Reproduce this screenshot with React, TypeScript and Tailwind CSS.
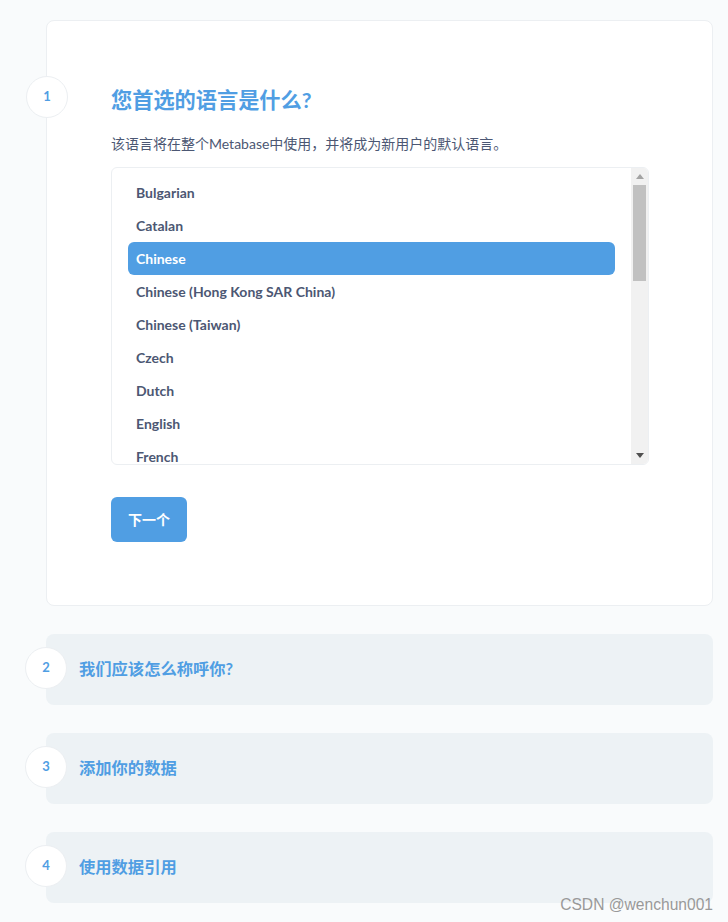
const FONT = { fontFamily: 'Lato, "Noto Sans CJK SC", sans-serif' };

const languages = [
  "Bulgarian",
  "Catalan",
  "Chinese",
  "Chinese (Hong Kong SAR China)",
  "Chinese (Taiwan)",
  "Czech",
  "Dutch",
  "English",
  "French",
  "German",
];

function StepCircle({ n, className }: { n: number; className: string }) {
  return (
    <div
      className={`absolute left-[-21px] flex h-[42px] w-[42px] items-center justify-center rounded-full border border-[#eceff2] bg-white text-[13px] font-bold text-[#509ee3] ${className}`}
    >
      {n}
    </div>
  );
}

function CollapsedStep({ n, title }: { n: number; title: string }) {
  return (
    <div className="relative flex h-[71px] items-center rounded-lg bg-[#edf2f5] pl-[33px]">
      <StepCircle n={n} className="top-[13px]" />
      <h2 className="text-[16.3px] font-bold text-[#509ee3]">{title}</h2>
    </div>
  );
}

export default function App() {
  return (
    <div className="relative min-h-[922px] bg-[#f9fbfc] pl-[46px] pr-[15px] pt-[20px]" style={FONT}>
      <div className="flex flex-col gap-[28px]">
        {/* Step 1 */}
        <div className="relative rounded-lg border border-[#eceff2] bg-white pb-[63px] pl-[64px] pr-[64px] pt-[65px]">
          <StepCircle n={1} className="top-[55px]" />
          <h1 className="text-[21.2px] font-bold leading-[28px] text-[#509ee3]">您首选的语言是什么?</h1>
          <p className="mt-[20px] text-[14px] leading-[20px] text-[#4c5773]">
            该语言将在整个Metabase中使用，并将成为新用户的默认语言。
          </p>

          <div className="mt-[13px] flex h-[298px] w-[538px] overflow-hidden rounded-md border border-[#eceff2]">
            <div className="flex-1 overflow-hidden px-4 pt-[8px]">
              {languages.map((l) => (
                <div
                  key={l}
                  className={`flex h-[33px] items-center rounded-md px-2 text-[14px] font-bold ${
                    l === "Chinese" ? "bg-[#509ee3] text-white" : "text-[#4c5773]"
                  }`}
                >
                  {l}
                </div>
              ))}
            </div>
            {/* scrollbar */}
            <div className="flex w-[17px] flex-col items-center bg-[#f1f1f1]">
              <div className="flex h-[17px] items-center justify-center">
                <svg width="8" height="5" viewBox="0 0 8 5">
                  <path d="M0 5 L4 0 L8 5 Z" fill="#a3a3a3" />
                </svg>
              </div>
              <div className="h-[96px] w-[13px] bg-[#c1c1c1]" />
              <div className="flex-1" />
              <div className="flex h-[17px] items-center justify-center">
                <svg width="8" height="5" viewBox="0 0 8 5">
                  <path d="M0 0 L4 5 L8 0 Z" fill="#505050" />
                </svg>
              </div>
            </div>
          </div>

          <button className="mt-[32px] flex h-[45px] w-[76px] items-center justify-center rounded-md bg-[#509ee3] text-[14px] font-bold text-white">
            下一个
          </button>
        </div>

        <CollapsedStep n={2} title="我们应该怎么称呼你?" />
        <CollapsedStep n={3} title="添加你的数据" />
        <CollapsedStep n={4} title="使用数据引用" />
      </div>

      <div
        className="absolute bottom-[6px] right-[15px] text-[15.6px] text-[#999999]"
        style={{ fontFamily: '"Liberation Sans", Arial, sans-serif' }}
      >
        CSDN @wenchun001
      </div>
    </div>
  );
}
